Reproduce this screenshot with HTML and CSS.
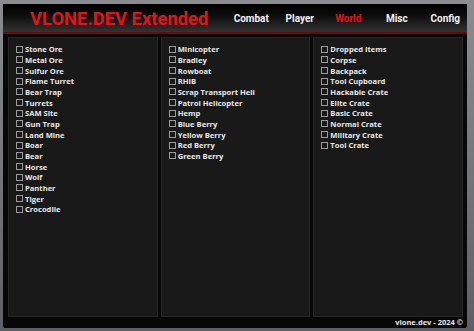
FILE: index.html
```html
<!DOCTYPE html>
<html>
<head>
<meta charset="utf-8">
<link rel="stylesheet" href="styles.css">
</head>
<body>
<div class="window">
  <header class="header">
    <h1 class="title">VLONE.DEV Extended</h1>
    <nav class="nav">
      <span class="tab">Combat</span>
      <span class="tab">Player</span>
      <span class="tab active">World</span>
      <span class="tab">Misc</span>
      <span class="tab">Config</span>
    </nav>
  </header>
  <main class="content">
    <section class="panel">
      <label class="item"><span class="box"></span>Stone Ore</label>
      <label class="item"><span class="box"></span>Metal Ore</label>
      <label class="item"><span class="box"></span>Sulfur Ore</label>
      <label class="item"><span class="box"></span>Flame Turret</label>
      <label class="item"><span class="box"></span>Bear Trap</label>
      <label class="item"><span class="box"></span>Turrets</label>
      <label class="item"><span class="box"></span>SAM Site</label>
      <label class="item"><span class="box"></span>Gun Trap</label>
      <label class="item"><span class="box"></span>Land Mine</label>
      <label class="item"><span class="box"></span>Boar</label>
      <label class="item"><span class="box"></span>Bear</label>
      <label class="item"><span class="box"></span>Horse</label>
      <label class="item"><span class="box"></span>Wolf</label>
      <label class="item"><span class="box"></span>Panther</label>
      <label class="item"><span class="box"></span>Tiger</label>
      <label class="item"><span class="box"></span>Crocodile</label>
    </section>
    <section class="panel">
      <label class="item"><span class="box"></span>Minicopter</label>
      <label class="item"><span class="box"></span>Bradley</label>
      <label class="item"><span class="box"></span>Rowboat</label>
      <label class="item"><span class="box"></span>RHIB</label>
      <label class="item"><span class="box"></span>Scrap Transport Heli</label>
      <label class="item"><span class="box"></span>Patrol Helicopter</label>
      <label class="item"><span class="box"></span>Hemp</label>
      <label class="item"><span class="box"></span>Blue Berry</label>
      <label class="item"><span class="box"></span>Yellow Berry</label>
      <label class="item"><span class="box"></span>Red Berry</label>
      <label class="item"><span class="box"></span>Green Berry</label>
    </section>
    <section class="panel">
      <label class="item"><span class="box"></span>Dropped Items</label>
      <label class="item"><span class="box"></span>Corpse</label>
      <label class="item"><span class="box"></span>Backpack</label>
      <label class="item"><span class="box"></span>Tool Cupboard</label>
      <label class="item"><span class="box"></span>Hackable Crate</label>
      <label class="item"><span class="box"></span>Elite Crate</label>
      <label class="item"><span class="box"></span>Basic Crate</label>
      <label class="item"><span class="box"></span>Normal Crate</label>
      <label class="item"><span class="box"></span>Military Crate</label>
      <label class="item"><span class="box"></span>Tool Crate</label>
    </section>
  </main>
  <footer class="footer">vlone.dev - 2024 ©</footer>
</div>
</body>
</html>
```
FILE: styles.css
```css
html, body {
  margin: 0;
  padding: 0;
}
body {
  width: 474px;
  height: 331px;
  overflow: hidden;
  background: linear-gradient(180deg, #8a8c90 0%, #6f7276 60%, #5c6064 100%);
  font-family: "Open Sans", "DejaVu Sans", sans-serif;
}
.window {
  margin: 4px 0 0 3px;
  width: 464px;
  height: 324px;
  background: #070707;
  display: flex;
  flex-direction: column;
  border-radius: 2px;
}
.header {
  height: 28px;
  display: flex;
  align-items: center;
  background: linear-gradient(180deg, #000 0%, #0c0c0c 40%, #333 100%);
  border-bottom: 2px solid #6a0a0e;
  padding: 0 0 0 27px;
}
.title {
  margin: 0;
  font-family: Roboto, "Open Sans", sans-serif;
  font-size: 18.4px;
  font-weight: 700;
  color: #e3121c;
  white-space: nowrap;
  width: 197px;
  flex: none;
}
.nav {
  display: flex;
  font-family: Roboto, "Open Sans", sans-serif;
}
.tab {
  width: 48.5px;
  color: #f2f2f2;
  font-size: 10px;
  font-weight: 700;
  text-align: center;
  white-space: nowrap;
}
.tab.active { color: #e3121c; }
.content {
  flex: 1;
  display: flex;
  gap: 3px;
  padding: 3px 4px 0 5px;
}
.panel {
  flex: 1;
  background: #191919;
  border: 1px solid #262626;
  padding: 6px 0 0 7px;
  display: flex;
  flex-direction: column;
}
.item {
  display: flex;
  align-items: center;
  height: 10.67px;
  color: #e8e8e8;
  font-size: 7.6px;
  font-weight: 700;
  white-space: nowrap;
}
.box {
  width: 5px;
  height: 5px;
  border: 1px solid #9a9a9a;
  margin-right: 2px;
  flex: none;
}
.footer {
  height: 11px;
  line-height: 11px;
  text-align: right;
  color: #e8e8e8;
  font-size: 7.5px;
  font-weight: 700;
  padding-right: 4px;
}
```
